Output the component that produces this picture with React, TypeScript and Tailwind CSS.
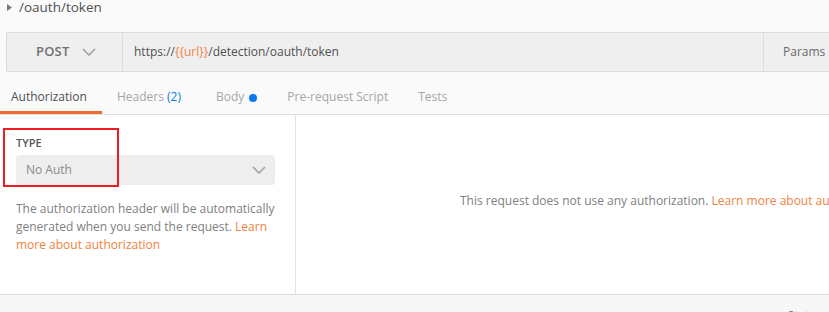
import React from "react";

function Chevron({ className }: { className?: string }) {
  return (
    <svg className={className} width="14" height="8" viewBox="0 0 14 8" fill="none">
      <polyline points="1,1 7,7 13,1" stroke="#a3a3a3" strokeWidth="1.6" />
    </svg>
  );
}

export default function App() {
  const font = { fontFamily: '"Open Sans", "Noto Sans", sans-serif' };
  return (
    <div
      className="relative w-[829px] h-[312px] overflow-hidden bg-[#fafafa] flex flex-col"
      style={font}
    >
      {/* title row */}
      <div className="h-[32px] flex items-start shrink-0">
        <svg className="ml-[7px] mt-[4px]" width="5" height="7" viewBox="0 0 5 7">
          <polygon points="0,0 5,3.5 0,7" fill="#777" />
        </svg>
        <span className="ml-[7px] text-[13.5px] leading-[15px] text-[#505050]">/oauth/token</span>
      </div>

      {/* url bar */}
      <div className="ml-[6px] w-[840px] h-[40px] shrink-0 flex border border-[#dcdcdc] bg-[#efefef]">
        <div className="w-[116px] shrink-0 border-r border-[#dcdcdc] flex items-center">
          <span className="ml-[29px] text-[13px] font-semibold text-[#707070] tracking-[0.2px]">POST</span>
          <Chevron className="ml-[12px]" />
        </div>
        <div className="w-[641px] shrink-0 flex items-center pl-[11px] text-[12px] text-[#505050] border-r border-[#dcdcdc]">
          https://<span className="text-[#f0823e]">{"{{url}}"}</span>/detection/oauth/token
        </div>
        <div className="flex items-center pl-[19px] text-[12px] text-[#6a6a6a]">Params</div>
      </div>

      {/* tabs */}
      <div className="h-[43px] shrink-0 flex border-b border-[#dedede] text-[12px] leading-[18px]">
        <div className="w-[102px] h-[42px] pl-[11px] pt-[16px] border-b-[3px] border-[#ec6b2d] text-[#505050]">
          Authorization
        </div>
        <div className="ml-[15px] pt-[16px] text-[#a6a6a6]">
          Headers <span className="text-[#097bed]">(2)</span>
        </div>
        <div className="ml-[35px] pt-[16px] text-[#a6a6a6] flex items-start">
          Body
          <span className="ml-[5px] mt-[6px] w-[8px] h-[8px] rounded-full bg-[#097bed]" />
        </div>
        <div className="ml-[30px] pt-[16px] text-[#a6a6a6]">Pre-request Script</div>
        <div className="ml-[30px] pt-[16px] text-[#a6a6a6]">Tests</div>
      </div>

      {/* content */}
      <div className="h-[180px] shrink-0 flex bg-white border-b border-[#dcdcdc]">
        <div className="w-[296px] shrink-0 border-r border-[#e2e2e2] pl-[16px] pr-[16px] pt-[20px] flex flex-col">
          <div className="text-[11px] leading-[16px] font-semibold text-[#555]">TYPE</div>
          <div className="mt-[4px] w-[259px] h-[30px] rounded-[3px] bg-[#eeeeee] flex items-center justify-between pl-[10px] pr-[9px]">
            <span className="text-[12px] text-[#8a8a8a]">No Auth</span>
            <Chevron />
          </div>
          <p className="mt-[15px] text-[12px] leading-[18px] text-[#808080] whitespace-nowrap">
            The authorization header will be automatically
            <br />
            generated when you send the request.{" "}
            <span className="text-[#f0823e]">Learn</span>
            <br />
            <span className="text-[#f0823e]">more about authorization</span>
          </p>
        </div>
        <div className="flex-1 pl-[164px] pt-[77px] text-[12px] leading-[18px] text-[#808080] whitespace-nowrap overflow-hidden">
          This request does not use any authorization.{" "}
          <span className="text-[#f0823e]">Learn more about authorization</span>
        </div>
      </div>

      {/* footer */}
      <div className="flex-1 bg-[#f7f7f7] flex justify-end">
        <div className="mt-[13px] mr-[-40px] text-[12px] leading-[16px] text-[#808080] whitespace-nowrap">
          Status: <span className="text-[#097bed]">200 OK</span>
        </div>
      </div>

      {/* red highlight box */}
      <div className="absolute left-[3px] top-[128px] w-[116px] h-[59px] border-2 border-[#ee1c25]" />
    </div>
  );
}
